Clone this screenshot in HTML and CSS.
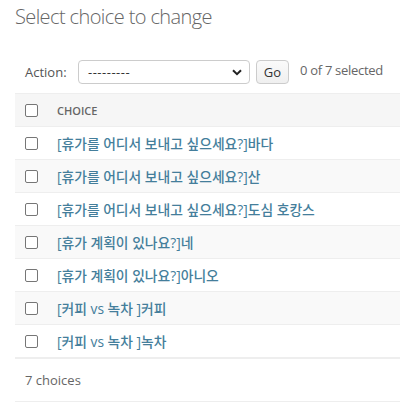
FILE: index.html
```html
<!DOCTYPE html>
<html>
<head>
<meta charset="utf-8">
<link rel="stylesheet" href="styles.css">
</head>
<body>
<div class="content">
  <h1 class="title">Select choice to change</h1>
  <div class="actions">
    <label class="action-label">Action:</label>
    <div class="select">
      <span class="select-text">---------</span>
      <svg class="chev" width="10" height="7" viewBox="0 0 10 7"><path d="M1 1.2 L5 5.2 L9 1.2" fill="none" stroke="#222" stroke-width="2"/></svg>
    </div>
    <button class="go">Go</button>
    <span class="counter">0 of 7 selected</span>
  </div>
  <table class="result">
    <thead>
      <tr><th class="cb"><span class="box"></span></th><th class="col">CHOICE</th></tr>
    </thead>
    <tbody>
      <tr><td class="cb"><span class="box"></span></td><td><a>[휴가를 어디서 보내고 싶으세요?]바다</a></td></tr>
      <tr class="alt"><td class="cb"><span class="box"></span></td><td><a>[휴가를 어디서 보내고 싶으세요?]산</a></td></tr>
      <tr><td class="cb"><span class="box"></span></td><td><a>[휴가를 어디서 보내고 싶으세요?]도심 호캉스</a></td></tr>
      <tr class="alt"><td class="cb"><span class="box"></span></td><td><a>[휴가 계획이 있나요?]네</a></td></tr>
      <tr><td class="cb"><span class="box"></span></td><td><a>[휴가 계획이 있나요?]아니오</a></td></tr>
      <tr class="alt"><td class="cb"><span class="box"></span></td><td><a>[커피 vs 녹차 ]커피</a></td></tr>
      <tr><td class="cb"><span class="box"></span></td><td><a>[커피 vs 녹차 ]녹차</a></td></tr>
    </tbody>
  </table>
  <p class="paginator">7 choices</p>
</div>
</body>
</html>
```
FILE: styles.css
```css
html, body { margin: 0; padding: 0; background: #fff; }
body {
  font-family: "Open Sans", "Noto Sans CJK KR", sans-serif;
  color: #333;
  font-size: 13px;
}
.content { padding: 4px 0 0 15px; }
.title {
  margin: 0;
  font-size: 20px;
  font-weight: 300;
  color: #666;
  line-height: 26px;
  letter-spacing: -0.6px;
}
.actions {
  display: flex;
  align-items: center;
  height: 36px;
  margin-top: 24px;
  padding-left: 10px;
  margin-bottom: 3px;
}
.action-label { color: #555; font-size: 13px; width: 53px; }
.select {
  border: 1px solid #ccc;
  border-radius: 4px;
  display: flex;
  align-items: center;
  justify-content: space-between;
  padding: 0 7px 0 9px;
  box-sizing: border-box;
  width: 172px;
  height: 24px;
  font-size: 13px;
  color: #333;
}
.select-text { letter-spacing: 0.5px; }
.go {
  margin-left: 6px;
  width: 33px;
  height: 24px;
  border: 1px solid #ccc;
  border-radius: 4px;
  background: linear-gradient(#fafafa, #efefef);
  font-family: inherit;
  font-size: 13px;
  color: #333;
  padding: 0;
}
.counter { margin-left: 11px; color: #666; font-size: 13px; margin-top: -4px; letter-spacing: -0.3px; }
.result {
  border-collapse: collapse;
  width: 500px;
}
.result th, .result td {
  height: 32px;
  padding: 0;
  vertical-align: middle;
  text-align: left;
}
.result thead th {
  background: #f6f6f6;
  border-top: 1px solid #eee;
  border-bottom: 1px solid #eee;
}
.result td { border-bottom: 1px solid #eee; }
.result tbody tr:last-child td { border-bottom: 2px solid #eee; }
.result tr.alt td { background: #f9f9f9; }
.cb { width: 42px; }
.box {
  display: block;
  margin-left: 10px;
  width: 11px;
  height: 11px;
  border: 1px solid #767676;
  border-radius: 2px;
  background: #fff;
}
.col {
  font-size: 11px;
  font-weight: 600;
  color: #666;
  padding-top: 1px;
}
.result a {
  color: #447e9b;
  font-size: 13.8px;
  font-weight: 500;
  font-family: "Open Sans", "Noto Sans CJK KR", sans-serif;
}
.paginator {
  margin: 0;
  height: 42px;
  line-height: 42px;
  padding-left: 10px;
  color: #666;
  border-bottom: 1px solid #eee;
  width: 500px;
}
```
